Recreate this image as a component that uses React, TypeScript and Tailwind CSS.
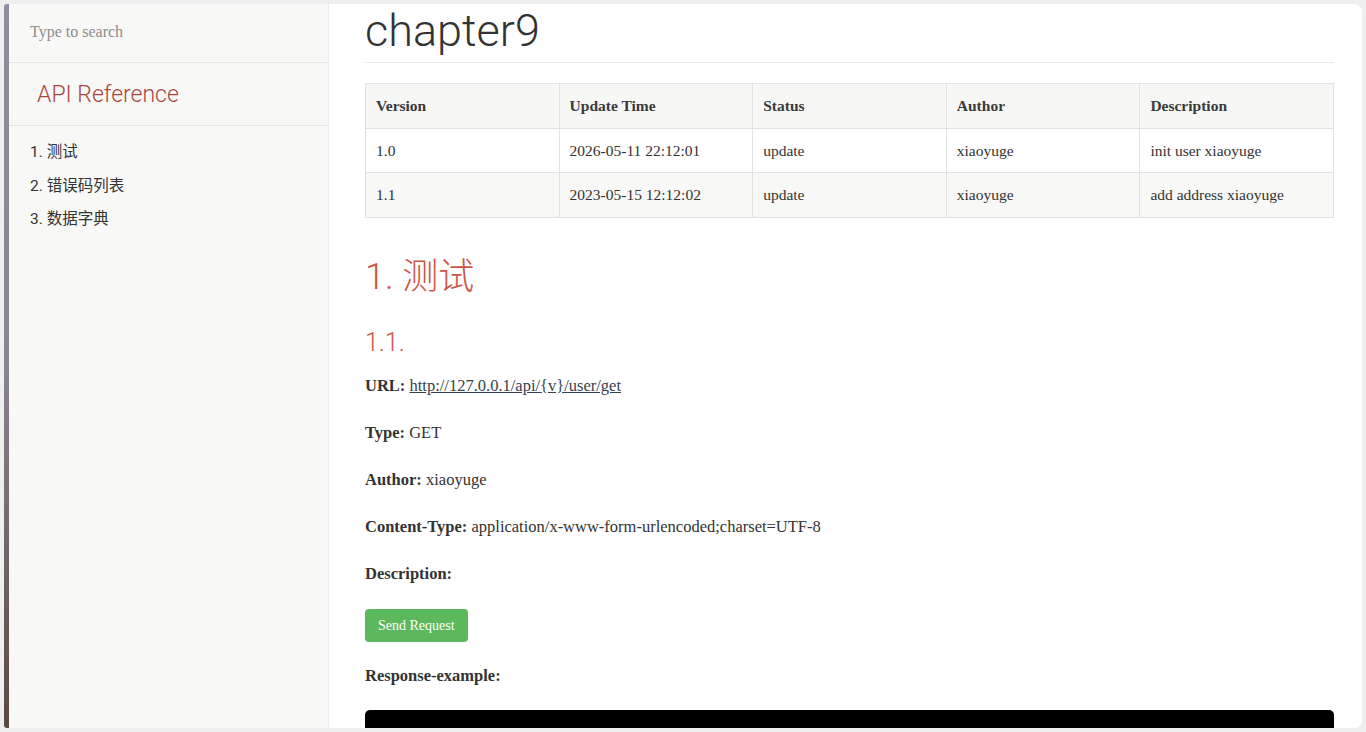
const serif = { fontFamily: '"Liberation Serif", "Noto Sans CJK SC", serif' };

const rows = [
  ["1.0", "2026-05-11 22:12:01", "update", "xiaoyuge", "init user xiaoyuge"],
  ["1.1", "2023-05-15 12:12:02", "update", "xiaoyuge", "add address xiaoyuge"],
];

const headers = ["Version", "Update Time", "Status", "Author", "Description"];

function Sidebar() {
  return (
    <aside className="flex w-[320px] shrink-0 flex-col border-r border-[#ebebea] bg-[#f8f8f6]">
      <div className="flex h-[59px] items-center border-b border-[#e6e6e4] pl-[21px] pb-[2px]">
        <span className="text-[16px] text-[#8d8d8d] font-['Liberation_Serif',serif]">Type to search</span>
      </div>
      <div className="flex h-[63px] items-center border-b border-[#e6e6e4] pl-[28px] pt-[3px]">
        <span className="text-[23px] font-light text-[#a6473f] font-['Roboto',sans-serif]">API Reference</span>
      </div>
      <nav className="flex flex-col pl-[21px] pt-[10px] text-[15.5px] text-[#333] font-['Roboto','Noto_Sans_CJK_SC',sans-serif]">
        <a className="leading-[33.5px]">1. 测试</a>
        <a className="leading-[33.5px]">2. 错误码列表</a>
        <a className="leading-[33.5px]">3. 数据字典</a>
      </nav>
    </aside>
  );
}

function HistoryTable() {
  return (
    <table className="mt-[20px] w-full table-fixed border-collapse text-[15.5px] text-[#333]" style={serif}>
      <thead>
        <tr className="h-[45px] bg-[#f7f7f6]">
          {headers.map((h) => (
            <th key={h} className="border border-[#e2e2e2] px-[10px] text-left font-bold text-[#3a3a3a]">
              {h}
            </th>
          ))}
        </tr>
      </thead>
      <tbody>
        {rows.map((r, i) => (
          <tr key={i} className={i % 2 === 1 ? "h-[45px] bg-[#f8f8f7]" : "h-[44px] bg-white"}>
            {r.map((c, j) => (
              <td key={j} className="border border-[#e2e2e2] px-[10px]">
                {c}
              </td>
            ))}
          </tr>
        ))}
      </tbody>
    </table>
  );
}

function Field({ label, children, first }: { label: string; children?: React.ReactNode; first?: boolean }) {
  return (
    <p className={`${first ? "mt-[15px]" : "mt-[23px]"} text-[16.5px] leading-[24px] text-[#333]`} style={serif}>
      <strong className="font-bold">{label}</strong> {children}
    </p>
  );
}

export default function App() {
  return (
    <div className="flex h-[732px] w-full overflow-hidden bg-[#efefef] p-[4px]">
      <div className="w-[5px] shrink-0 rounded-l-[3px] bg-gradient-to-b from-[#8f8d9e] via-[#8a8492] to-[#5a4941]" />
      <div className="flex flex-1 overflow-hidden rounded-r-[8px] bg-white">
        <Sidebar />
        <main className="flex-1 overflow-hidden pl-[36px] pr-[28px]">
          <h1 className="border-b border-[#eaeae6] pb-[5px] text-[45px] font-light leading-[53px] text-[#333] font-['Roboto',sans-serif]">
            chapter9
          </h1>
          <HistoryTable />
          <h2 className="mt-[37px] text-[36px] font-light leading-[44px] text-[#cc5444] font-['Roboto','Noto_Sans_CJK_SC',sans-serif]">
            1. 测试
          </h2>
          <h3 className="mt-[28px] text-[25px] font-light leading-[32px] text-[#cc5444] font-['Roboto',sans-serif]">1.1.</h3>
          <Field label="URL:" first>
            <a className="text-[#36424f] underline">http://127.0.0.1/api/&#123;v&#125;/user/get</a>
          </Field>
          <Field label="Type:">GET</Field>
          <Field label="Author:">xiaoyuge</Field>
          <Field label="Content-Type:">application/x-www-form-urlencoded;charset=UTF-8</Field>
          <Field label="Description:" />
          <button
            className="mt-[23px] h-[33px] rounded-[4px] bg-[#5cb85c] px-[13px] text-[14px] text-white"
            style={serif}
          >
            Send Request
          </button>
          <p className="mt-[22px] text-[16.5px] font-bold leading-[24px] text-[#333]" style={serif}>
            Response-example:
          </p>
          <div className="mt-[22px] h-[200px] rounded-t-[5px] bg-black" />
        </main>
      </div>
    </div>
  );
}
